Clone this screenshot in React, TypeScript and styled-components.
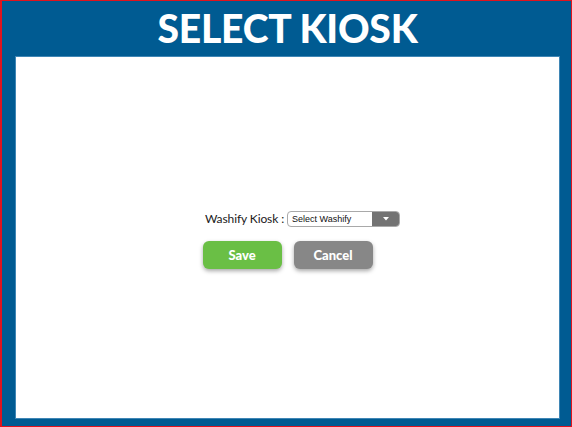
import React from "react";
import styled, { createGlobalStyle } from "styled-components";

const GlobalStyle = createGlobalStyle`
  html, body {
    margin: 0;
    padding: 0;
    background: #ffffff;
  }
`;

const Frame = styled.div`
  width: 572px;
  height: 427px;
  box-sizing: border-box;
  border: solid #e0141e;
  border-width: 1px 1px 1px 2px;
  background-color: #005b92;
  display: flex;
  flex-direction: column;
  padding: 0 11px 7px 13px;
`;

const Title = styled.h1`
  margin: 0;
  height: 55px;
  display: flex;
  align-items: center;
  justify-content: center;
  font-family: Lato, "Noto Sans", sans-serif;
  font-weight: 900;
  font-size: 39px;
  letter-spacing: -0.2px;
  color: #ffffff;
  padding-bottom: 1px;
  box-sizing: border-box;
`;

const Panel = styled.section`
  flex: 1;
  background-color: #ffffff;
  border: 1px solid #3f86b5;
  display: flex;
  flex-direction: column;
  align-items: center;
  justify-content: center;
  gap: 14px;
  padding-top: 4px;
`;

const FieldRow = styled.div`
  display: flex;
  flex-direction: row;
  align-items: center;
  gap: 3px;
  margin-left: 30px;
`;

const Label = styled.label`
  font-family: Lato, "Noto Sans", sans-serif;
  font-size: 12px;
  letter-spacing: -0.1px;
  color: #1a1a1a;
`;

const SelectBox = styled.div`
  width: 113px;
  height: 16px;
  box-sizing: border-box;
  border: 1px solid #a9a9a9;
  border-radius: 4px;
  display: flex;
  flex-direction: row;
  align-items: stretch;
  overflow: hidden;
`;

const SelectText = styled.span`
  flex: 1;
  font-family: "Liberation Sans", Arial, sans-serif;
  font-size: 9px;
  line-height: 14px;
  color: #111111;
  padding-left: 4px;
`;

const SelectArrow = styled.span`
  width: 27px;
  background-color: #737373;
  display: flex;
  align-items: center;
  justify-content: center;
`;

const ButtonRow = styled.div`
  display: flex;
  flex-direction: row;
  gap: 12px;
`;

const Button = styled.button<{ $tone: "save" | "cancel" }>`
  width: 79px;
  height: 28px;
  border: none;
  border-radius: 6px;
  background-color: ${(p) => (p.$tone === "save" ? "#6abf45" : "#878787")};
  box-shadow: 0 2px 4px rgba(0, 0, 0, 0.35);
  color: #ffffff;
  font-family: Lato, "Noto Sans", sans-serif;
  font-weight: 900;
  font-size: 13px;
  cursor: pointer;
`;

const App = () => {
  return (
    <>
      <GlobalStyle />
      <Frame>
        <Title>SELECT KIOSK</Title>
        <Panel>
          <FieldRow>
            <Label>Washify Kiosk :</Label>
            <SelectBox>
              <SelectText>Select Washify</SelectText>
              <SelectArrow>
                <svg width="6" height="4" viewBox="0 0 6 4">
                  <path d="M0 0 L6 0 L3 3.5 Z" fill="#ffffff" />
                </svg>
              </SelectArrow>
            </SelectBox>
          </FieldRow>
          <ButtonRow>
            <Button $tone="save">Save</Button>
            <Button $tone="cancel">Cancel</Button>
          </ButtonRow>
        </Panel>
      </Frame>
    </>
  );
};

export default App;
